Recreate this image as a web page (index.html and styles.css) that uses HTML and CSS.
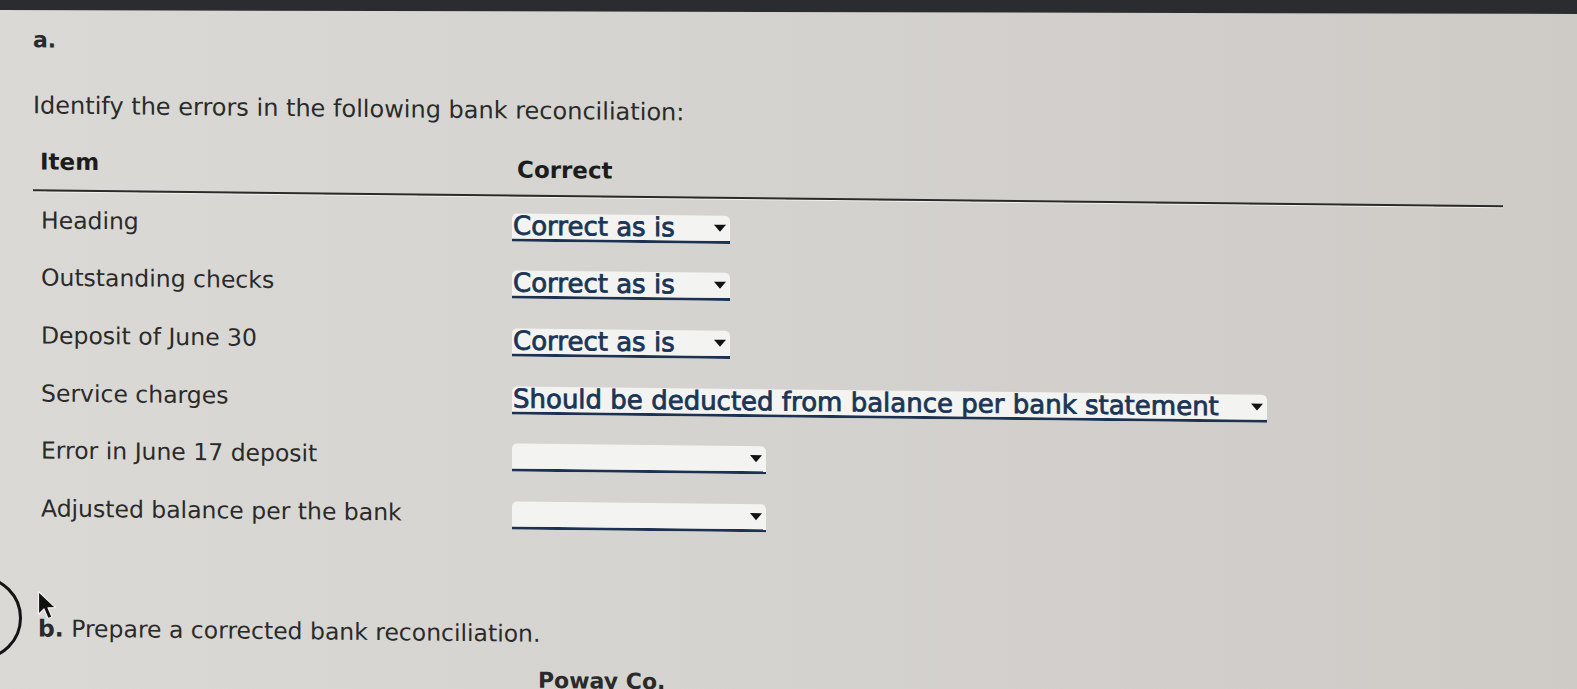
FILE: index.html
```html
<!DOCTYPE html>
<html lang="en">
<head>
<meta charset="utf-8">
<title>Bank reconciliation</title>
<link rel="stylesheet" href="styles.css">
</head>
<body>
<div class="topbar"></div>
<main class="page">
  <div class="part-label">a.</div>
  <p class="prompt">Identify the errors in the following bank reconciliation:</p>

  <div class="table">
    <div class="head">
      <div class="th th-item">Item</div>
      <div class="th th-correct">Correct</div>
    </div>
    <div class="row">
      <div class="item">Heading</div>
      <div class="select w-short"><span class="value">Correct as is</span><span class="caret"></span></div>
    </div>
    <div class="row">
      <div class="item">Outstanding checks</div>
      <div class="select w-short"><span class="value">Correct as is</span><span class="caret"></span></div>
    </div>
    <div class="row">
      <div class="item">Deposit of June 30</div>
      <div class="select w-short"><span class="value">Correct as is</span><span class="caret"></span></div>
    </div>
    <div class="row">
      <div class="item">Service charges</div>
      <div class="select w-long"><span class="value">Should be deducted from balance per bank statement</span><span class="caret"></span></div>
    </div>
    <div class="row">
      <div class="item">Error in June 17 deposit</div>
      <div class="select w-empty"><span class="value"></span><span class="caret"></span></div>
    </div>
    <div class="row">
      <div class="item">Adjusted balance per the bank</div>
      <div class="select w-empty"><span class="value"></span><span class="caret"></span></div>
    </div>
  </div>

  <p class="part-b"><span class="b-label">b.</span> Prepare a corrected bank reconciliation.</p>
  <div class="company">Poway Co.</div>
</main>

<div class="nav-ring"></div>
<svg class="pointer" width="20" height="31" viewBox="0 0 20 31" aria-hidden="true">
  <path d="M1.5 1.5 L1.5 24.5 L7 19 L11 28.5 L15 27 L11 17.8 L18.5 17.6 Z" fill="#111" stroke="#f2f2f2" stroke-width="1.2" stroke-linejoin="round"/>
</svg>
</body>
</html>
```

FILE: styles.css
```css
html, body {
  margin: 0;
  height: 100%;
  overflow: hidden;
}

body {
  background: linear-gradient(90deg, #dad9d6 0%, #d5d3cf 45%, #cecbc7 100%);
  font-family: "DejaVu Sans", Verdana, sans-serif;
  color: #2a2a2a;
  position: relative;
}

/* dark window frame along the top edge, slightly deeper toward the right */
.topbar {
  height: 15px;
  background: #2a2c30;
  clip-path: polygon(0 0, 100% 0, 100% 14px, 0 10px);
}

/* the screen sits at a slight slant */
.page {
  padding: 0 0 0 33px;
  margin-top: -15px;
  transform: skewY(0.62deg);
  transform-origin: 0 0;
}

.part-label {
  font-weight: bold;
  font-size: 22px;
  line-height: 28px;
  padding-top: 26px;
}

.prompt {
  font-size: 24px;
  line-height: 28px;
  margin: 37px 0 0 0;
}

.table {
  width: 1470px;
  margin-top: 28px;
}

.head {
  display: grid;
  grid-template-columns: 475px 1fr;
  align-items: end;
  padding: 0 0 14px 7px;
  border-bottom: 2px solid #2a2a2a;
  box-shadow: 0 1px 0 #f2f2f0;
}

.th {
  font-weight: bold;
  font-size: 23px;
  line-height: 28px;
  color: #1c1c1c;
}

.th-correct {
  position: relative;
  top: 3px;
  left: 2px;
}

.row {
  display: grid;
  grid-template-columns: 471px 1fr;
  align-items: center;
  height: 57.6px;
  padding-left: 8px;
}

.item {
  font-size: 23.5px;
  line-height: 28px;
}

.select {
  display: flex;
  align-items: center;
  justify-content: space-between;
  height: 25px;
  background: #f3f3f1;
  border-radius: 5px 5px 0 0;
  border-bottom: 3.5px solid #1d3250;
  position: relative;
  top: 2px;
}

.w-short { width: 218px; }
.w-long { width: 755px; }
.w-empty { width: 254px; }

.value {
  font-size: 26px;
  line-height: 25px;
  color: #1b3556;
  -webkit-text-stroke: 0.8px #1b3556;
  padding-left: 1px;
  white-space: nowrap;
}

.caret {
  width: 0;
  height: 0;
  border-left: 6px solid transparent;
  border-right: 6px solid transparent;
  border-top: 7px solid #111;
  margin-right: 4px;
}

.part-b {
  font-size: 23.5px;
  line-height: 28px;
  margin: 77px 0 0 5px;
}

.b-label {
  font-weight: bold;
}

.company {
  font-weight: bold;
  font-size: 22px;
  line-height: 28px;
  margin: 19px 0 0 505px;
}

/* edge of the round navigation button */
.nav-ring {
  position: absolute;
  left: -62px;
  top: 576px;
  width: 78px;
  height: 78px;
  border: 3.5px solid #141414;
  border-radius: 50%;
}

.pointer {
  position: absolute;
  left: 37px;
  top: 590px;
}
```
